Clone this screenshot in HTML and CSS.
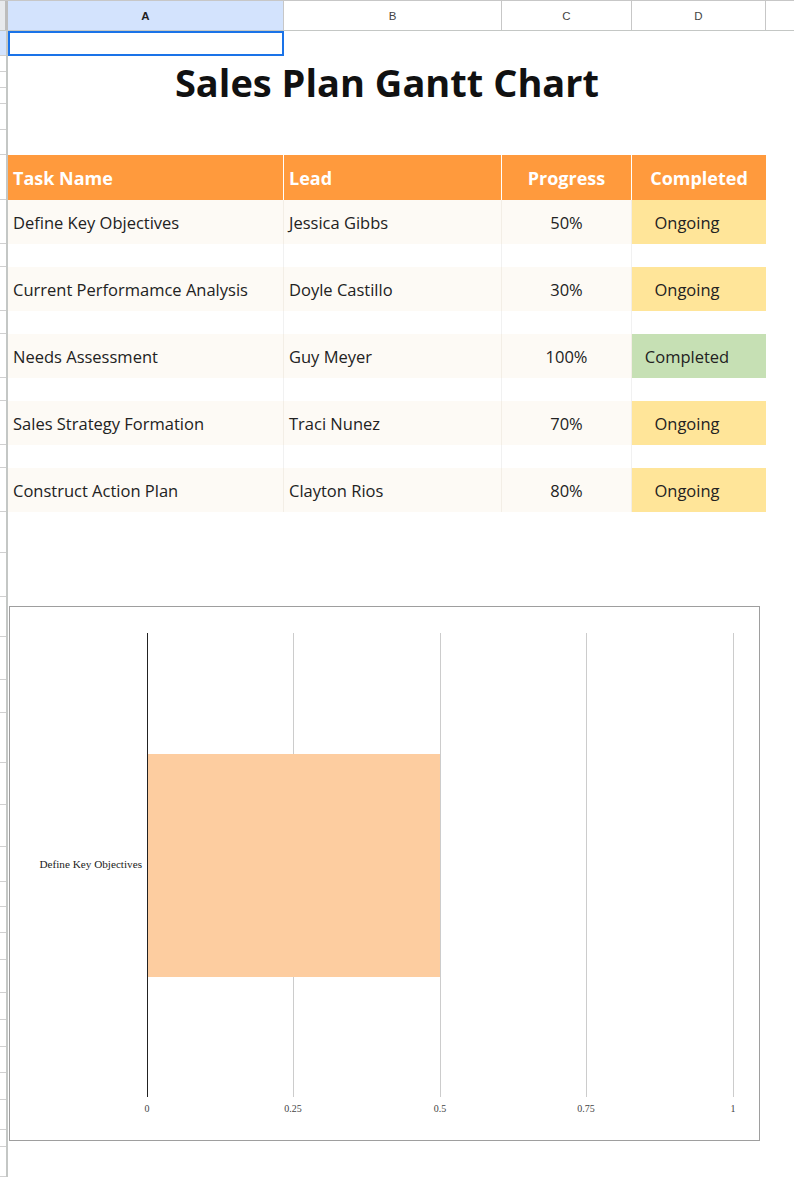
FILE: index.html
```html
<!DOCTYPE html>
<html>
<head>
<meta charset="utf-8">
<title>Sales Plan Gantt Chart</title>
<link rel="stylesheet" href="styles.css">
</head>
<body>
<div class="sheet">
  <div class="colheads">
    <div class="corner"></div>
    <div class="ch active">A</div>
    <div class="ch">B</div>
    <div class="ch">C</div>
    <div class="ch">D</div>
    <div class="ch last"></div>
  </div>
  <div class="main">
    <div class="rowheads">
      <div class="rh h25 active"></div>
      <div class="rh h16"></div>
      <div class="rh h16"></div>
      <div class="rh h16"></div>
      <div class="rh h26"></div>
      <div class="rh h25"></div>
      <div class="rh h45"></div>
      <div class="rh h44"></div>
      <div class="rh h23"></div>
      <div class="rh h44"></div>
      <div class="rh h23"></div>
      <div class="rh h44"></div>
      <div class="rh h23"></div>
      <div class="rh h44"></div>
      <div class="rh h23"></div>
      <div class="rh h44"></div>
      <div class="rh h41"></div>
      <div class="rh h44"></div>
      <div class="rh h40"></div>
      <div class="rh h43"></div>
      <div class="rh h33"></div>
      <div class="rh h50"></div>
      <div class="rh h42"></div>
      <div class="rh h42"></div>
      <div class="rh h35"></div>
      <div class="rh h25"></div>
      <div class="rh h26"></div>
      <div class="rh h27"></div>
      <div class="rh h33"></div>
      <div class="rh h27"></div>
      <div class="rh h27"></div>
      <div class="rh h26"></div>
      <div class="rh h27"></div>
      <div class="rh h30"></div>
      <div class="rh h17"></div>
      <div class="rh h30"></div>
    </div>
    <div class="content">
      <div class="row-one"><div class="selected"></div></div>
      <div class="title-row"><h1 class="title">Sales Plan Gantt Chart</h1></div>
      <div class="table">
        <div class="th">Task Name</div>
        <div class="th">Lead</div>
        <div class="th center">Progress</div>
        <div class="th center last">Completed</div>

        <div class="td">Define Key Objectives</div>
        <div class="td">Jessica Gibbs</div>
        <div class="td center">50%</div>
        <div class="td status ongoing">Ongoing</div>
        <div class="gap"></div><div class="gap"></div><div class="gap"></div><div class="gap last"></div>

        <div class="td">Current Performamce Analysis</div>
        <div class="td">Doyle Castillo</div>
        <div class="td center">30%</div>
        <div class="td status ongoing">Ongoing</div>
        <div class="gap"></div><div class="gap"></div><div class="gap"></div><div class="gap last"></div>

        <div class="td">Needs Assessment</div>
        <div class="td">Guy Meyer</div>
        <div class="td center">100%</div>
        <div class="td status done">Completed</div>
        <div class="gap"></div><div class="gap"></div><div class="gap"></div><div class="gap last"></div>

        <div class="td">Sales Strategy Formation</div>
        <div class="td">Traci Nunez</div>
        <div class="td center">70%</div>
        <div class="td status ongoing">Ongoing</div>
        <div class="gap"></div><div class="gap"></div><div class="gap"></div><div class="gap last"></div>

        <div class="td">Construct Action Plan</div>
        <div class="td">Clayton Rios</div>
        <div class="td center">80%</div>
        <div class="td status ongoing">Ongoing</div>
      </div>
      <div class="chart">
        <svg class="plot" width="749" height="533" viewBox="0 0 749 533" xmlns="http://www.w3.org/2000/svg">
          <g class="grid">
            <line x1="283.5" y1="26" x2="283.5" y2="490"/>
            <line x1="430.5" y1="26" x2="430.5" y2="490"/>
            <line x1="576.5" y1="26" x2="576.5" y2="490"/>
            <line x1="723.5" y1="26" x2="723.5" y2="490"/>
          </g>
          <rect class="bar" x="137" y="147" width="293" height="223"/>
          <line class="axis" x1="137.5" y1="26" x2="137.5" y2="490"/>
          <text class="cat" x="132" y="261" text-anchor="end">Define Key Objectives</text>
          <g class="ticks" text-anchor="middle">
            <text x="137" y="505">0</text>
            <text x="283" y="505">0.25</text>
            <text x="430" y="505">0.5</text>
            <text x="576" y="505">0.75</text>
            <text x="723" y="505">1</text>
          </g>
        </svg>
      </div>
    </div>
  </div>
</div>
</body>
</html>
```

FILE: styles.css
```css
* {
  box-sizing: border-box;
}

html,
body {
  margin: 0;
  padding: 0;
  background: #ffffff;
}

body {
  width: 794px;
  height: 1177px;
  overflow: hidden;
  font-family: "Open Sans", "Noto Sans", sans-serif;
  color: #222222;
}

.colheads {
  display: grid;
  grid-template-columns: 8px 276px 218px 130px 134px 28px;
  height: 31px;
  border-top: 1px solid #c7c7c7;
  border-bottom: 1px solid #c4c7c5;
}

.corner {
  background: #e8eaed;
  border-right: 3px solid #bdbdbd;
}

.ch {
  display: flex;
  align-items: center;
  justify-content: center;
  font-family: "Liberation Sans", Arial, sans-serif;
  font-size: 11.5px;
  color: #444444;
  border-right: 1px solid #c7c7c7;
}

.ch.active {
  background: #d3e3fd;
  color: #1f1f1f;
  font-weight: bold;
}

.ch.last {
  border-right: none;
}

.main {
  display: flex;
}

.rowheads {
  width: 8px;
  flex: none;
  display: flex;
  flex-direction: column;
  border-right: 2px solid #c4c7c5;
}

.rh {
  border-bottom: 1px solid #d0d0d0;
}

.rh.active {
  background: #d3e3fd;
}

.h16 { height: 16px; }
.h17 { height: 17px; }
.h23 { height: 23px; }
.h25 { height: 25px; }
.h26 { height: 26px; }
.h27 { height: 27px; }
.h30 { height: 30px; }
.h33 { height: 33px; }
.h35 { height: 35px; }
.h40 { height: 40px; }
.h41 { height: 41px; }
.h42 { height: 42px; }
.h43 { height: 43px; }
.h44 { height: 44px; }
.h45 { height: 45px; }
.h50 { height: 50px; }

.content {
  flex: 1;
  min-width: 0;
}

.row-one {
  height: 25px;
}

.selected {
  width: 276px;
  height: 25px;
  border: 2px solid #1a73e8;
}

.title-row {
  height: 99px;
  width: 758px;
  padding-top: 2px;
}

.title {
  margin: 0;
  text-align: center;
  font-family: "Open Sans", sans-serif;
  font-weight: 700;
  font-size: 38px;
  line-height: 48px;
  color: #111111;
}

.table {
  display: grid;
  grid-template-columns: 276px 218px 130px 134px;
  grid-template-rows: 45px 44px 23px 44px 23px 44px 23px 44px 23px 44px;
  width: 758px;
}

.th {
  background: #ff9a3d;
  color: #ffffff;
  font-weight: 700;
  font-size: 18px;
  display: flex;
  align-items: center;
  padding-left: 5px;
  border-right: 1px solid #ffffff;
}

.th.last {
  border-right: none;
}

.td {
  background: #fdfaf5;
  font-size: 16.5px;
  color: #222222;
  display: flex;
  align-items: center;
  padding-left: 5px;
  border-right: 1px solid #f3eee6;
}

.center {
  justify-content: center;
  padding-left: 0;
}

.status {
  justify-content: center;
  padding-left: 0;
  padding-right: 24px;
  border-right: none;
}

.ongoing {
  background: #ffe599;
}

.done {
  background: #c6e0b4;
}

.gap {
  border-right: 1px solid #f1f1f1;
}

.gap.last {
  border-right: none;
}

.chart {
  width: 751px;
  height: 535px;
  margin-top: 94px;
  margin-left: 1px;
  border: 1px solid #9e9e9e;
  background: #ffffff;
}

.plot {
  display: block;
}

.grid line {
  stroke: #cccccc;
  stroke-width: 1;
}

.axis {
  stroke: #222222;
  stroke-width: 1;
}

.bar {
  fill: #fdcda0;
}

.cat {
  font-family: "Liberation Serif", "Times New Roman", serif;
  font-size: 11.2px;
  fill: #222222;
}

.ticks text {
  font-family: "Liberation Serif", "Times New Roman", serif;
  font-size: 10px;
  fill: #444444;
}
```
